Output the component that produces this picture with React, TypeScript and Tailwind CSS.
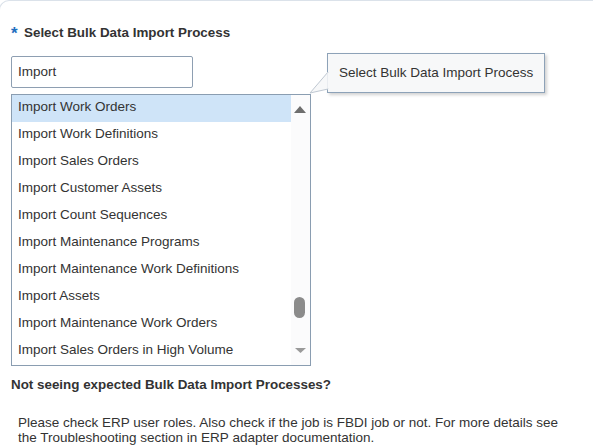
const items = [
  "Import Work Orders",
  "Import Work Definitions",
  "Import Sales Orders",
  "Import Customer Assets",
  "Import Count Sequences",
  "Import Maintenance Programs",
  "Import Maintenance Work Definitions",
  "Import Assets",
  "Import Maintenance Work Orders",
  "Import Sales Orders in High Volume",
];

export default function App() {
  return (
    <div className="relative h-[448px] w-[593px] overflow-hidden bg-white font-['Liberation_Sans',Arial,sans-serif] text-[#333]">
      <div className="-ml-px h-full rounded-tl-[10px] border-l border-t border-[#dbe2ea] pl-[11px] pt-[24px]">
        <div className="flex items-start">
          <span className="w-[13px] text-[17px] font-bold leading-none text-[#1f6fbf]">*</span>
          <span className="text-[13.4px] font-bold leading-[16px]">Select Bulk Data Import Process</span>
        </div>

        <div className="mt-[14px] flex h-[32px] w-[182px] items-center rounded-[2px] border border-[#8e9fb2] pl-[6px] text-[13.5px]">
          Import
        </div>

        <div className="mt-[6px] flex h-[272px] w-[300px] border border-[#8a9db1] bg-white">
          <ul className="w-[279px]">
            {items.map((item, i) => (
              <li
                key={item}
                className={`h-[27px] pb-[4px] pl-[6px] pt-[1px] text-[13.5px] leading-[22px] ${i === 0 ? "bg-[#cfe4f8]" : ""}`}
              >
                {item}
              </li>
            ))}
          </ul>
          <div className="relative flex-1 bg-[#fbfbfc]">
            <svg className="absolute left-[3px] top-[11px]" width="12" height="7" viewBox="0 0 12 7">
              <polygon points="0,7 6,0 12,7" fill="#6e6e6e" />
            </svg>
            <div className="absolute left-[3px] top-[202px] h-[21px] w-[11px] rounded-full bg-[#8b8b8b]" />
            <svg className="absolute left-[4px] top-[253px]" width="11" height="5" viewBox="0 0 11 5">
              <polygon points="0,0 11,0 5.5,5" fill="#9a9a9a" />
            </svg>
          </div>
        </div>

        <p className="mt-[11px] text-[13.4px] font-bold leading-[16px]">
          Not seeing expected Bulk Data Import Processes?
        </p>
        <p className="mt-[22px] pl-[7px] pr-[20px] text-[13.5px] leading-[15px]">
          Please check ERP user roles. Also check if the job is FBDI job or not. For more details see the Troubleshooting section in ERP adapter documentation.
        </p>
      </div>

      <div className="absolute left-[327px] top-[53px] flex h-[40px] w-[218px] items-center border border-[#8da2b8] bg-[#f7f8f9] pl-[11px] text-[13.5px] shadow-[2px_2px_3px_rgba(0,0,0,0.18)]">
        Select Bulk Data Import Process
      </div>
      <svg className="absolute left-[308px] top-[68px]" width="22" height="28" viewBox="0 0 22 28">
        <polygon points="20,4 2,25 20,21" fill="#f7f8f9" stroke="#bfc8d2" strokeWidth="1" />
        <rect x="19.5" y="4.6" width="2" height="16" fill="#f7f8f9" />
      </svg>
    </div>
  );
}
